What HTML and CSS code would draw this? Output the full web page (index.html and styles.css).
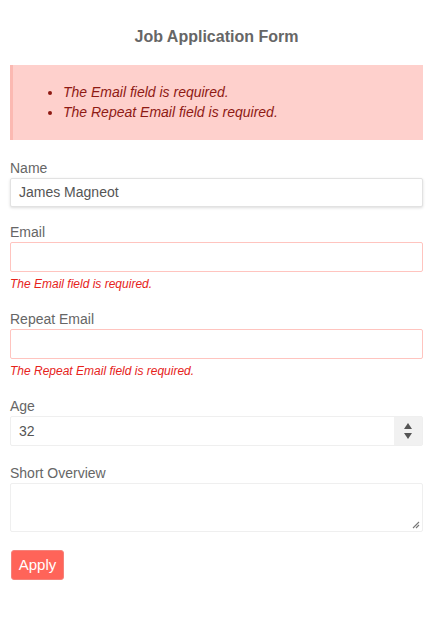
FILE: index.html
```html
<!DOCTYPE html>
<html>
<head>
<meta charset="utf-8">
<link rel="stylesheet" href="styles.css">
</head>
<body>
<div class="page">
  <h1 class="title">Job Application Form</h1>
  <div class="alert">
    <ul class="alert-list">
      <li>The Email field is required.</li>
      <li>The Repeat Email field is required.</li>
    </ul>
  </div>
  <form class="form">
    <div class="group">
      <label class="label">Name</label>
      <div class="input input-shadow">James Magneot</div>
    </div>
    <div class="group">
      <label class="label">Email</label>
      <div class="input input-error"></div>
      <div class="error">The Email field is required.</div>
    </div>
    <div class="group">
      <label class="label">Repeat Email</label>
      <div class="input input-error"></div>
      <div class="error">The Repeat Email field is required.</div>
    </div>
    <div class="group">
      <label class="label">Age</label>
      <div class="input input-light number">
        <span class="number-value">32</span>
        <span class="spinner"><span class="arrow-up"></span><span class="arrow-down"></span></span>
      </div>
    </div>
    <div class="group group-overview">
      <label class="label">Short Overview</label>
      <div class="textarea">
        <svg class="grip" width="8" height="8" viewBox="0 0 8 8"><path d="M7 1 L1 7 M7 4 L4 7" stroke="#777" stroke-width="1.1" fill="none"/></svg>
      </div>
    </div>
    <div class="actions">
      <button type="button" class="btn">Apply</button>
    </div>
  </form>
</div>
</body>
</html>
```

FILE: styles.css
```css
* { box-sizing: border-box; }
html, body { margin: 0; padding: 0; background: #fff; }
body {
  font-family: "Liberation Sans", Arial, sans-serif;
  color: #666;
}
.page {
  padding: 27px 10px 0 10px;
}
.title {
  margin: 0 0 18px 0;
  font-size: 16px;
  line-height: 20px;
  font-weight: bold;
  color: #666;
  text-align: center;
}
.alert {
  background: #fed0cc;
  border-left: 3px solid #fbb9b2;
  padding: 17px 0 18px 0;
  margin-bottom: 19px;
}
.alert-list {
  margin: 0;
  padding-left: 50px;
  font-size: 14px;
  line-height: 20px;
  font-style: italic;
  color: #8e1a14;
}
.form { display: block; margin: 0; }
.group {
  display: flex;
  flex-direction: column;
  margin-bottom: 16px;
}
.group-overview { padding-top: 2px; }
.label {
  font-size: 14px;
  line-height: 18px;
  margin-bottom: 1px;
  color: #666;
}
.input {
  height: 30px;
  border: 1px solid #e6e6e6;
  border-radius: 2px;
  background: #fff;
  font-size: 14px;
  line-height: 28px;
  color: #555;
  padding: 0 8px;
}
.input-shadow {
  height: 29px;
  line-height: 27px;
  border-color: #e2e2e2;
  box-shadow: 0 1px 3px rgba(0,0,0,0.14);
}
.input-error {
  border-color: #ffc4bf;
  border-width: 1.5px;
}
.input-light { border-color: #efefef; }
.error {
  margin-top: 4px;
  margin-bottom: 2px;
  font-size: 12px;
  line-height: 16px;
  font-style: italic;
  color: #e6231b;
}
.number {
  display: flex;
  align-items: stretch;
  padding-right: 0;
}
.number-value { flex: 1; }
.spinner {
  width: 28px;
  background: #f1f1f1;
  display: flex;
  flex-direction: column;
  align-items: center;
  justify-content: center;
  gap: 4px;
}
.arrow-up {
  width: 0; height: 0;
  border-left: 4px solid transparent;
  border-right: 4px solid transparent;
  border-bottom: 6px solid #555;
}
.arrow-down {
  width: 0; height: 0;
  border-left: 4px solid transparent;
  border-right: 4px solid transparent;
  border-top: 6px solid #555;
}
.textarea {
  height: 49px;
  border: 1px solid #efefef;
  border-radius: 2px;
  display: flex;
  justify-content: flex-end;
  align-items: flex-end;
  padding: 0 2px 2px 0;
}
.grip { display: block; }
.actions { padding-top: 2px; padding-left: 1px; }
.btn {
  font-family: "Liberation Sans", Arial, sans-serif;
  background: #ff6459;
  color: #fff;
  border: 1px solid #f5827a;
  border-radius: 3px;
  font-size: 15px;
  height: 30px;
  width: 53px;
  padding: 0;
  line-height: 28px;
}
```
